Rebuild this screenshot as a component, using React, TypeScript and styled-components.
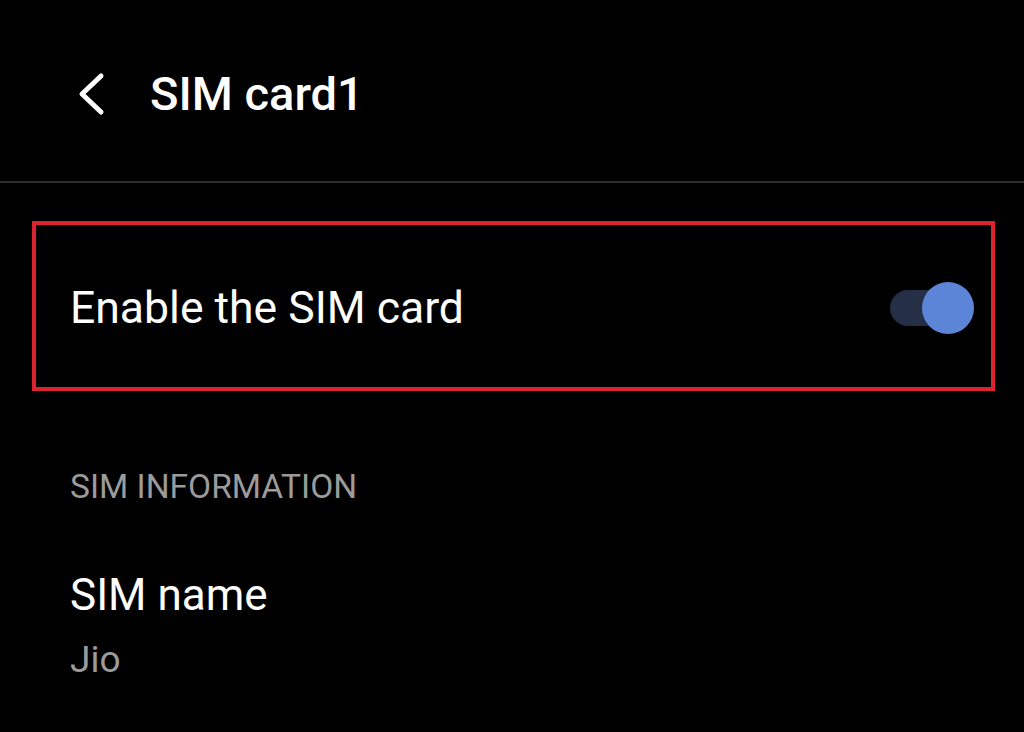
import React from "react";
import styled, { createGlobalStyle } from "styled-components";

const Global = createGlobalStyle`
  html, body { margin: 0; padding: 0; background: #000; }
  body { font-family: Roboto, "Noto Sans", sans-serif; -webkit-font-smoothing: antialiased; }
`;

const Screen = styled.div`
  width: 1024px;
  height: 732px;
  background: #000;
  color: #fff;
  overflow: hidden;
  display: flex;
  flex-direction: column;
`;

const Header = styled.header`
  height: 183px;
  display: flex;
  align-items: center;
  padding-left: 76px;
  padding-top: 6px;
  box-sizing: border-box;
  border-bottom: 2px solid #2e2e2e;
  gap: 42px;
`;

const BackButton = styled.button`
  background: none;
  border: none;
  padding: 0;
  width: 32px;
  height: 48px;
  display: flex;
  align-items: center;
  justify-content: center;
  color: #fff;
`;

const Title = styled.h1`
  margin: 0;
  font-size: 47px;
  font-weight: 500;
  letter-spacing: 0;
`;

const Content = styled.main`
  padding: 38px 29px 0 32px;
  display: flex;
  flex-direction: column;
`;

const Highlight = styled.div`
  border: 4px solid #dc2430;
  height: 170px;
  box-sizing: border-box;
  display: flex;
  align-items: center;
  justify-content: space-between;
  padding: 4px 17px 0 34px;
`;

const RowLabel = styled.span`
  font-size: 44.5px;
  font-weight: 400;
`;

const Switch = styled.div`
  position: relative;
  width: 84px;
  height: 52px;
  display: flex;
  align-items: center;
`;

const Track = styled.div`
  width: 60px;
  height: 36px;
  border-radius: 18px;
  background: #253046;
`;

const Thumb = styled.div`
  position: absolute;
  right: 0;
  top: 0;
  width: 52px;
  height: 52px;
  border-radius: 50%;
  background: #5c85d8;
`;

const SectionHeader = styled.div`
  margin: 76px 0 0 38px;
  font-size: 33.5px;
  color: #9b9b9b;
`;

const Item = styled.div`
  margin: 63px 0 0 38px;
  display: flex;
  flex-direction: column;
  gap: 17px;
`;

const ItemTitle = styled.span`
  font-size: 44px;
`;

const ItemValue = styled.span`
  font-size: 37px;
  color: #9b9b9b;
`;

export default function App() {
  return (
    <>
      <Global />
      <Screen>
        <Header>
          <BackButton aria-label="Back">
            <svg width="30" height="44" viewBox="0 0 30 44" fill="none">
              <path d="M24 4 L5 22 L24 40" stroke="#fff" strokeWidth="5" strokeLinecap="round" strokeLinejoin="round" />
            </svg>
          </BackButton>
          <Title>SIM card1</Title>
        </Header>
        <Content>
          <Highlight>
            <RowLabel>Enable the SIM card</RowLabel>
            <Switch>
              <Track />
              <Thumb />
            </Switch>
          </Highlight>
          <SectionHeader>SIM INFORMATION</SectionHeader>
          <Item>
            <ItemTitle>SIM name</ItemTitle>
            <ItemValue>Jio</ItemValue>
          </Item>
        </Content>
      </Screen>
    </>
  );
}
